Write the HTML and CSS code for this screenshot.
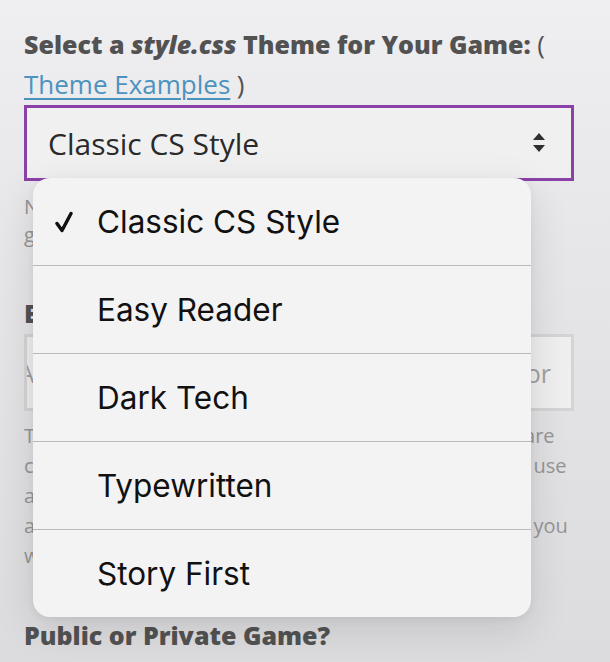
FILE: index.html
```html
<!DOCTYPE html>
<html lang="en">
<head>
<meta charset="utf-8">
<title>Theme select</title>
<link rel="stylesheet" href="styles.css">
</head>
<body>
<div class="page">
  <section class="field">
    <div class="label">Select a <em>style.css</em> Theme for Your Game: <span class="paren">(</span><br><a class="link" href="#">Theme Examples</a> <span class="paren">)</span></div>
    <div class="select">
      <span class="select-value">Classic CS Style</span>
      <svg class="select-arrows" width="12" height="22" viewBox="0 0 12 22" aria-hidden="true">
        <path d="M0 8 L6 1 L12 8 Z" fill="#303030"/>
        <path d="M0 13 L6 20 L12 13 Z" fill="#303030"/>
      </svg>
    </div>
    <p class="hint">Note: themes change the look of your<br>game and can be changed later.</p>
  </section>

  <section class="field">
    <div class="label">Enter a Description</div>
    <div class="input"><span>A short summary of your story and its hero or</span></div>
    <p class="hint hint-long">These short notes will appear on your story page and are<br>can be shown to readers. Keep it brief and clear, try to use<br>a few words that sum up the story.<br>about the story setting and the sort of big choices that you<br>will make.</p>
  </section>

  <div class="label">Public or Private Game?</div>

  <div class="menu" role="listbox">
    <div class="menu-item is-selected">
      <svg class="check" width="18" height="22" viewBox="0 0 18 22" aria-hidden="true">
        <path d="M2 12.5 L7 19.5 L16 2.5" fill="none" stroke="#111" stroke-width="3.4" stroke-linecap="round" stroke-linejoin="round"/>
      </svg>
      <span>Classic CS Style</span>
    </div>
    <div class="menu-item"><span>Easy Reader</span></div>
    <div class="menu-item"><span>Dark Tech</span></div>
    <div class="menu-item"><span>Typewritten</span></div>
    <div class="menu-item"><span>Story First</span></div>
  </div>
</div>
</body>
</html>
```

FILE: styles.css
```css
html, body {
  margin: 0;
  padding: 0;
}

body {
  width: 610px;
  height: 662px;
  overflow: hidden;
  background: linear-gradient(180deg, #efeef0 0%, #e6e5e8 40%, #dcdbde 100%);
  font-family: "Open Sans", "Liberation Sans", sans-serif;
  color: #505050;
}

.page {
  position: relative;
  padding: 24px 36px 0 24px;
}

.field {
  margin-bottom: 44px;
}

.label {
  font-size: 25px;
  line-height: 40px;
  font-weight: 800;
  color: #525252;
  white-space: nowrap;
}

.label em {
  font-style: italic;
}

.paren {
  font-size: 26px;
  font-weight: 400;
}

.link {
  font-size: 26px;
  font-weight: 400;
  color: #4b93be;
  text-decoration: underline;
  text-underline-offset: 4px;
  text-decoration-thickness: 2px;
}

.select {
  margin-top: 1px;
  height: 70px;
  border: 3px solid #8b42a8;
  background: #f0f0f1;
  display: flex;
  align-items: center;
  justify-content: space-between;
  padding: 0 26px 0 21px;
}

.select-value {
  font-size: 30px;
  color: #2a2a2a;
}

.hint {
  margin: 12px 0 0;
  font-size: 20px;
  line-height: 28px;
  color: #959595;
  white-space: nowrap;
}

.hint-long {
  margin-top: 10px;
  line-height: 30px;
}

.input {
  margin-top: 1px;
  height: 71px;
  border: 3px solid #d4d4d5;
  background: #efeff0;
  display: flex;
  align-items: center;
  justify-content: flex-end;
  padding: 0 20px;
  font-size: 25px;
  color: #a0a0a0;
  white-space: nowrap;
  overflow: hidden;
}

.menu {
  position: absolute;
  left: 33px;
  top: 178px;
  width: 498px;
  background: #f3f3f4;
  border-radius: 17px;
  box-shadow: 0 12px 40px rgba(0, 0, 0, 0.12), 0 2px 8px rgba(0, 0, 0, 0.05);
  overflow: hidden;
}

.menu-item {
  height: 87px;
  display: flex;
  align-items: center;
  padding-left: 64px;
  position: relative;
  font-family: "Inter", "Liberation Sans", sans-serif;
  font-size: 31.5px;
  color: #111;
}

.menu-item + .menu-item {
  border-top: 1px solid #b9b9bb;
}

.check {
  position: absolute;
  left: 22px;
  top: 33px;
}
```
